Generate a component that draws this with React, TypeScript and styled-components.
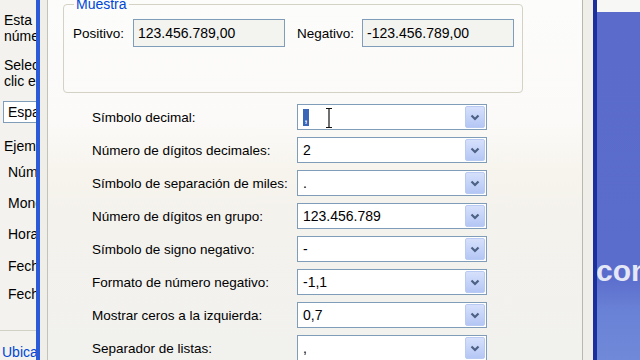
import React from "react";
import styled, { createGlobalStyle } from "styled-components";

const Global = createGlobalStyle`
  html, body { margin: 0; padding: 0; }
  body {
    width: 640px;
    height: 360px;
    overflow: hidden;
    font-family: "Liberation Sans", Arial, sans-serif;
    font-size: 13.5px;
    color: #000;
  }
`;

const Screen = styled.div`
  display: flex;
  width: 640px;
  height: 360px;
  overflow: hidden;
`;

/* ---------- background window (left) ---------- */
const BackWindow = styled.div`
  width: 36px;
  flex: none;
  background: #f3f2ee;
  display: flex;
  flex-direction: column;
  overflow: hidden;
  white-space: nowrap;
  font-size: 14px;
`;

const BackText = styled.div<{ $indent?: number; $top?: number; $blue?: boolean }>`
  line-height: 16px;
  padding-left: ${(p) => p.$indent ?? 4}px;
  margin-top: ${(p) => p.$top ?? 0}px;
  color: ${(p) => (p.$blue ? "#0046d5" : "#000")};
`;

const BackCombo = styled.div`
  margin: 12px 0 0 3px;
  height: 26px;
  border: 1px solid #7f9db9;
  border-right: none;
  background: #fff;
  display: flex;
  align-items: center;
  padding-left: 4px;
  box-sizing: border-box;
`;

const BackRule = styled.div`
  margin-top: 28px;
  height: 1px;
  background: #d0d0c4;
`;

/* ---------- dialog frame ---------- */
const Frame = styled.div<{ $w: number; $color: string }>`
  width: ${(p) => p.$w}px;
  flex: none;
  background: ${(p) => p.$color};
`;

const DialogEdge = styled.div<{ $side: "left" | "right" }>`
  width: ${(p) => (p.$side === "left" ? 7 : 10)}px;
  flex: none;
  background: #efeee9;
  ${(p) =>
    p.$side === "left"
      ? "border-right: 1px solid #c4c3b8;"
      : "border-left: 1px solid #b9b8ae;"}
`;

const TabPage = styled.div`
  width: 534px;
  flex: none;
  overflow: hidden;
  background: linear-gradient(
    180deg,
    #fcfcfb 0%,
    #fbfaf8 34%,
    #f7f4ed 48%,
    #f4f2ed 60%,
    #f1f1ee 100%
  );
`;

const GroupBox = styled.fieldset`
  margin: -4px 0 0 15px;
  width: 460px;
  box-sizing: border-box;
  padding: 7px 8px 45px 9px;
  border: 1px solid #d3d2c4;
  border-radius: 4px;
  min-width: 0;
`;

const Legend = styled.legend`
  padding: 0 2px;
  margin-left: 1px;
  font-size: 14px;
  line-height: 16px;
  color: #0046d5;
`;

const SampleRow = styled.div`
  display: flex;
  align-items: center;
`;

const SampleLabel = styled.span<{ $w: number; $gap?: number }>`
  width: ${(p) => p.$w}px;
  margin-left: ${(p) => p.$gap ?? 0}px;
  flex: none;
  white-space: nowrap;
`;

const ReadOnlyBox = styled.div`
  width: 152px;
  height: 28px;
  box-sizing: border-box;
  border: 1px solid #7f9db9;
  background: #f3f3f0;
  display: flex;
  align-items: center;
  padding-left: 4px;
  flex: none;
  font-size: 14px;
`;

const SettingsGrid = styled.div`
  margin: 11px 0 0 44px;
  display: grid;
  grid-template-columns: 205px 190px;
  grid-auto-rows: 26px;
  row-gap: 7px;
  align-items: center;
`;

const SettingLabel = styled.span`
  white-space: nowrap;
`;

const Combo = styled.div`
  position: relative;
  height: 26px;
  box-sizing: border-box;
  border: 1px solid #7f9db9;
  background: #fff;
  padding: 1px;
  display: flex;
  align-items: stretch;
`;

const ComboText = styled.div`
  flex: 1;
  display: flex;
  align-items: center;
  padding-left: 4px;
  white-space: pre;
  font-size: 14px;
`;

const Selection = styled.span`
  background: #3a66b8;
  color: #fff;
  padding: 0 1px;
  line-height: 17px;
`;

const ComboButton = styled.div`
  width: 20px;
  flex: none;
  box-sizing: border-box;
  border: 1px solid #b9caf3;
  border-radius: 2px;
  background: linear-gradient(180deg, #d6e0fb 0%, #c3d2f8 55%, #b4c6f4 100%);
  display: flex;
  align-items: center;
  justify-content: center;
`;

const Cursor = styled.svg`
  position: absolute;
  left: 27px;
  top: 2px;
`;

/* ---------- desktop behind (right) ---------- */
const Desktop = styled.div`
  flex: 1;
  display: flex;
  flex-direction: column;
  overflow: hidden;
`;

const DesktopStrip = styled.div`
  height: 12px;
  background: #f7f7f6;
`;

const DesktopBlue = styled.div`
  flex: 1;
  background: linear-gradient(
    180deg,
    #5a6bcb 0%,
    #5b6dcc 76%,
    #6a82d6 86%,
    #7089d8 100%
  );
  overflow: hidden;
  white-space: nowrap;
`;

const DesktopWord = styled.div`
  margin-top: 244px;
  margin-left: -1px;
  font-size: 30px;
  line-height: 30px;
  font-weight: bold;
  color: #e4e7f5;
`;

const Chevron = () => (
  <svg width="10" height="7" viewBox="0 0 10 7">
    <polyline
      points="1.5,1.5 5,5 8.5,1.5"
      fill="none"
      stroke="#4d6185"
      strokeWidth="2.2"
    />
  </svg>
);

const IBeam = () => (
  <Cursor width="8" height="22" viewBox="0 0 8 22">
    <path
      d="M1 1.5h2.2M4.8 1.5H7M4 2v18M1 20.5h2.2M4.8 20.5H7"
      stroke="#111"
      strokeWidth="1.2"
      fill="none"
    />
    <path d="M3 1.5h2M3 20.5h2" stroke="#111" strokeWidth="1.2" />
  </Cursor>
);

const settings: { label: string; value: string }[] = [
  { label: "Símbolo decimal:", value: "" },
  { label: "Número de dígitos decimales:", value: "2" },
  { label: "Símbolo de separación de miles:", value: "." },
  { label: "Número de dígitos en grupo:", value: "123.456.789" },
  { label: "Símbolo de signo negativo:", value: "-" },
  { label: "Formato de número negativo:", value: "-1,1" },
  { label: "Mostrar ceros a la izquierda:", value: "0,7" },
  { label: "Separador de listas:", value: "," },
];

export default function App() {
  return (
    <>
      <Global />
      <Screen>
        <BackWindow>
          <BackText $blue $top={-13}>Estándares y formatos</BackText>
          <BackText $top={9}>Esta opción afecta al formato que algunos programas usan</BackText>
          <BackText>números, monedas, fechas y horas.</BackText>
          <BackText $top={13}>Seleccione un elemento para que coincida con sus</BackText>
          <BackText>clic en Personalizar para elegir sus propios formatos:</BackText>
          <BackCombo>Español (España, internacional)</BackCombo>
          <BackText $top={15}>Ejemplos</BackText>
          <BackText $indent={8} $top={10}>Número:</BackText>
          <BackText $indent={8} $top={15}>Moneda:</BackText>
          <BackText $indent={8} $top={15}>Hora:</BackText>
          <BackText $indent={8} $top={16}>Fecha corta:</BackText>
          <BackText $indent={8} $top={12}>Fecha larga:</BackText>
          <BackRule />
          <BackText $indent={2} $top={13} $blue>Ubicación</BackText>
        </BackWindow>

        <Frame $w={4} $color="#2a5ad8" />
        <DialogEdge $side="left" />

        <TabPage>
          <GroupBox>
            <Legend>Muestra</Legend>
            <SampleRow>
              <SampleLabel $w={60}>Positivo:</SampleLabel>
              <ReadOnlyBox>123.456.789,00</ReadOnlyBox>
              <SampleLabel $w={65} $gap={12}>Negativo:</SampleLabel>
              <ReadOnlyBox>-123.456.789,00</ReadOnlyBox>
            </SampleRow>
          </GroupBox>

          <SettingsGrid>
            {settings.map((s, i) => (
              <React.Fragment key={s.label}>
                <SettingLabel>{s.label}</SettingLabel>
                <Combo>
                  <ComboText>
                    {i === 0 ? <Selection>,</Selection> : s.value}
                  </ComboText>
                  <ComboButton>
                    <Chevron />
                  </ComboButton>
                  {i === 0 && <IBeam />}
                </Combo>
              </React.Fragment>
            ))}
          </SettingsGrid>
        </TabPage>

        <DialogEdge $side="right" />
        <Frame $w={4} $color="#1b309e" />

        <Desktop>
          <DesktopStrip />
          <DesktopBlue>
            <DesktopWord>con</DesktopWord>
          </DesktopBlue>
        </Desktop>
      </Screen>
    </>
  );
}
